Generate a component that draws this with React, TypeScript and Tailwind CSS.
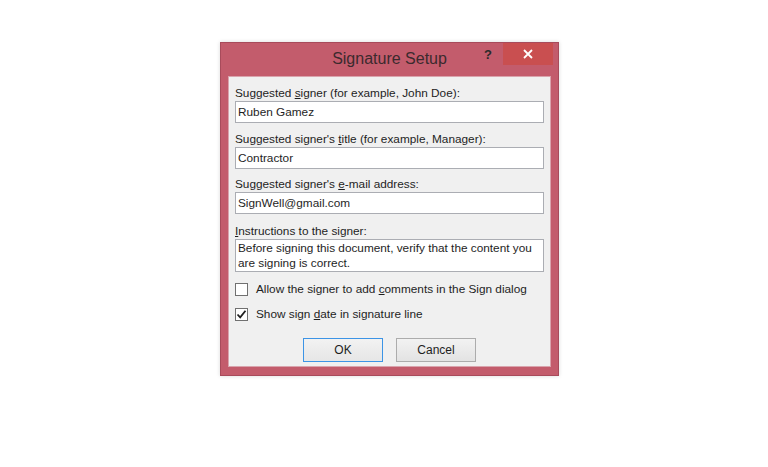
const font = { fontFamily: '"Liberation Sans", Arial, sans-serif' };

const Field = ({
  label,
  value,
  className = "",
}: {
  label: React.ReactNode;
  value: React.ReactNode;
  className?: string;
}) => (
  <div className={`flex flex-col ${className}`}>
    <div className="h-4 text-[11.8px] leading-4 text-[#1e1e1e]">{label}</div>
    <div className="h-[22px] border border-[#abadb3] bg-white px-[2px] text-[11.8px] leading-[20px] text-[#1e1e1e]">
      {value}
    </div>
  </div>
);

const CheckRow = ({
  checked,
  children,
  className = "",
}: {
  checked: boolean;
  children: React.ReactNode;
  className?: string;
}) => (
  <div className={`flex items-center gap-[8px] ${className}`}>
    <div className="flex h-[13px] w-[13px] items-center justify-center border border-[#707070] bg-white">
      {checked && (
        <svg width="11" height="11" viewBox="0 0 11 11">
          <path
            d="M1.5 5.5 L4.2 8.3 L9.5 1.8"
            fill="none"
            stroke="#1e1e1e"
            strokeWidth="1.8"
          />
        </svg>
      )}
    </div>
    <span className="text-[11.8px] leading-4 text-[#1e1e1e]">{children}</span>
  </div>
);

export default function App() {
  return (
    <div className="min-h-[467px] w-full bg-white pl-[220px] pt-[42px]" style={font}>
      <div className="flex h-[334px] w-[339px] flex-col border border-[#a84b5b] bg-[#c35c6c] shadow-[0_0_4px_rgba(0,0,0,0.15)]">
        {/* title bar */}
        <div className="grid h-[33px] grid-cols-[1fr_auto_1fr]">
          <div />
          <div className="pt-[6px] text-[16px] leading-5 text-[#3b2a2e]">
            Signature Setup
          </div>
          <div className="flex items-start justify-end pr-[5px]">
            <span className="mr-[11px] mt-[2px] text-[13px] font-bold leading-5 text-[#2a2a2a]">
              ?
            </span>
            <div className="flex h-[22px] w-[50px] items-center justify-center bg-[#c94f50]">
              <svg width="10" height="10" viewBox="0 0 10 10">
                <path d="M1 1 L9 9 M9 1 L1 9" stroke="white" strokeWidth="1.8" />
              </svg>
            </div>
          </div>
        </div>

        {/* client area */}
        <div className="mx-[7px] flex flex-1 flex-col border border-[#d9a4ad] bg-[#f0f0f0] px-[6px] pt-[8px]">
          <Field
            label={
              <>
                Suggested <u>s</u>igner (for example, John Doe):
              </>
            }
            value="Ruben Gamez"
          />
          <Field
            className="mt-[8px]"
            label={
              <>
                Suggested signer&apos;s <u>t</u>itle (for example, Manager):
              </>
            }
            value="Contractor"
          />
          <Field
            className="mt-[7px]"
            label={
              <>
                Suggested signer&apos;s <u>e</u>-mail address:
              </>
            }
            value="SignWell@gmail.com"
          />
          <div className="mt-[9px] flex flex-col">
            <div className="h-4 text-[11.8px] leading-4 text-[#1e1e1e]">
              <u>I</u>nstructions to the signer:
            </div>
            <div className="h-[33px] border border-[#abadb3] bg-white px-[2px] pt-[1px] text-[11.8px] leading-[15px] text-[#1e1e1e]">
              Before signing this document, verify that the content you are
              signing is correct.
            </div>
          </div>

          <CheckRow className="mt-[9px]" checked={false}>
            Allow the signer to add <u>c</u>omments in the Sign dialog
          </CheckRow>
          <CheckRow className="mt-[9px]" checked>
            Show sign <u>d</u>ate in signature line
          </CheckRow>

          <div className="mt-[16px] flex justify-center gap-[13px]">
            <button className="h-[24px] w-[80px] border border-[#3c94e6] bg-gradient-to-b from-[#f2f2f2] to-[#e6e6e6] text-[12px] text-[#1e1e1e]">
              OK
            </button>
            <button className="h-[24px] w-[80px] border border-[#acacac] bg-gradient-to-b from-[#f2f2f2] to-[#e3e3e3] text-[12px] text-[#1e1e1e]">
              Cancel
            </button>
          </div>
        </div>
        <div className="h-[8px]" />
      </div>
    </div>
  );
}
